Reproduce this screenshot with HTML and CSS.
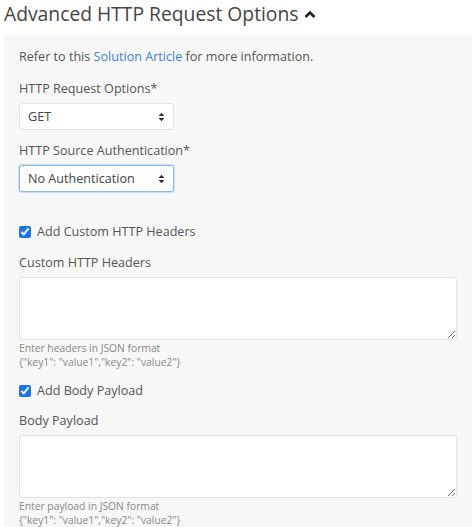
FILE: index.html
```html
<!DOCTYPE html>
<html>
  <head>
    <title>Advanced HTTP Request Options</title>
    <link rel="stylesheet" href="styles.css">
  </head>
  <body>
    <h2 class="title">
      Advanced HTTP Request Options
      <svg class="chevron" width="12" height="9" viewBox="0 0 12 9">
        <path d="M1.5 7 L6 2.5 L10.5 7" fill="none" stroke="#222" stroke-width="2.6"/>
      </svg>
    </h2>

    <div class="panel">
      <p class="note">Refer to this <a href="#">Solution Article</a> for more information.</p>

      <label class="field-label" for="method">HTTP Request Options*</label>
      <div class="select-wrap">
        <select id="method" class="select">
          <option>GET</option>
        </select>
        <svg class="arrows" width="7" height="10" viewBox="0 0 7 10">
          <path d="M0.5 4 L3.5 0.8 L6.5 4 Z M0.5 6 L3.5 9.2 L6.5 6 Z" fill="#333"/>
        </svg>
      </div>

      <label class="field-label" for="auth">HTTP Source Authentication*</label>
      <div class="select-wrap">
        <select id="auth" class="select focused">
          <option>No Authentication</option>
        </select>
        <svg class="arrows" width="7" height="10" viewBox="0 0 7 10">
          <path d="M0.5 4 L3.5 0.8 L6.5 4 Z M0.5 6 L3.5 9.2 L6.5 6 Z" fill="#333"/>
        </svg>
      </div>

      <label class="check">
        <input type="checkbox" checked>
        Add Custom HTTP Headers
      </label>

      <label class="field-label" for="headers">Custom HTTP Headers</label>
      <textarea id="headers" class="area"></textarea>
      <p class="hint">Enter headers in JSON format<br>{"key1": "value1","key2": "value2"}</p>

      <label class="check after-hint">
        <input type="checkbox" checked>
        Add Body Payload
      </label>

      <label class="field-label" for="payload">Body Payload</label>
      <textarea id="payload" class="area"></textarea>
      <p class="hint">Enter payload in JSON format<br>{"key1": "value1","key2": "value2"}</p>
    </div>
  </body>
</html>
```

FILE: styles.css
```css
body {
  margin: 0;
  background-color: #fff;
  font-family: 'Open Sans', sans-serif;
  color: #555;
}
.title {
  margin: 0 0 8px 0;
  padding: 0 0 0 4px;
  height: 27px;
  font-size: 19.3px;
  font-weight: normal;
  color: #444;
  line-height: 26px;
  display: flex;
  align-items: center;
  gap: 6px;
}
.chevron {
  margin-top: 1px;
}
.panel {
  margin: 0 2px 0 4px;
  padding: 12px 15px 20px 15px;
  background-color: #f7f7f7;
  display: flex;
  flex-direction: column;
  align-items: flex-start;
}
.note {
  margin: 0 0 13px 0;
  font-size: 12.6px;
  line-height: 20px;
}
.note a {
  color: #3d7fd1;
  text-decoration: none;
}
.field-label {
  font-size: 12.6px;
  line-height: 18px;
  margin-bottom: 5px;
}
.select-wrap {
  position: relative;
  margin-bottom: 12px;
}
.select {
  appearance: none;
  display: block;
  width: 155px;
  height: 27px;
  padding: 0 8px;
  font-family: inherit;
  font-size: 12.6px;
  color: #444;
  background-color: #fff;
  border: 1px solid #e2e2e2;
  border-radius: 3px;
}
.select.focused {
  border-color: #8ab6e8;
  box-shadow: 0 0 0 1px #c8ddf5;
}
.arrows {
  position: absolute;
  right: 9px;
  top: 9px;
  pointer-events: none;
}
.check {
  margin-top: 19px;
  display: flex;
  align-items: center;
  gap: 6px;
  font-size: 12.6px;
  line-height: 18px;
  margin-bottom: 13px;
}
.check.after-hint {
  margin-top: 13px;
  margin-bottom: 12px;
}
.check input {
  margin: 0;
  width: 12px;
  height: 12px;
  accent-color: #1b74e4;
}
.area {
  width: 100%;
  box-sizing: border-box;
  height: 63px;
  background-color: #fff;
  border: 1px solid #e2e2e2;
  border-radius: 3px;
  margin: 0;
}
.hint {
  margin: 2px 0 0 0;
  font-size: 10.3px;
  line-height: 13.5px;
  color: #888;
}
```
